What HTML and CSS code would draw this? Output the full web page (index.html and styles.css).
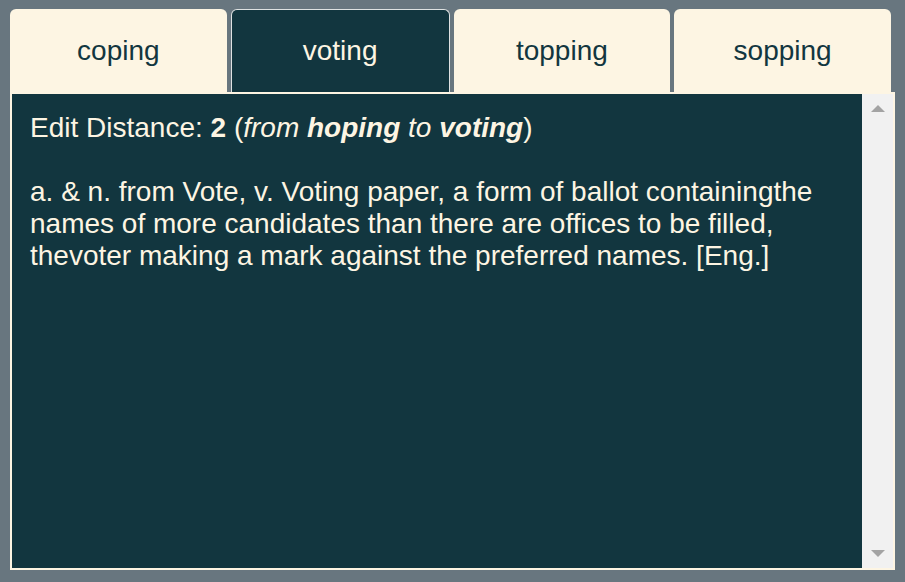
FILE: index.html
```html
<!DOCTYPE html>
<html>
<head>
<meta charset="utf-8">
<link rel="stylesheet" href="styles.css">
</head>
<body>
<div class="app">
  <div class="tabs">
    <div class="tab">coping</div>
    <div class="tab active">voting</div>
    <div class="tab">topping</div>
    <div class="tab">sopping</div>
  </div>
  <div class="panel">
    <div class="content">
      <p class="distance">Edit Distance: <b>2</b> (<i>from <b>hoping</b> to <b>voting</b></i>)</p>
      <p class="definition">a. &amp; n. from Vote, v. Voting paper, a form of ballot containingthe names of more candidates than there are offices to be filled, thevoter making a mark against the preferred names. [Eng.]</p>
    </div>
    <div class="scrollbar">
      <span class="arrow up"></span>
      <span class="arrow down"></span>
    </div>
  </div>
</div>
</body>
</html>
```
FILE: styles.css
```css
html, body {
  margin: 0;
  padding: 0;
  background: #68767f;
  font-family: "Liberation Sans", Arial, sans-serif;
}
.app {
  padding: 9px 0 0 10px;
  width: 885px;
}
.tabs {
  display: flex;
  gap: 4px;
  width: 881px;
  height: 83px;
}
.tab {
  flex: 1;
  background: #fdf5e3;
  color: #12363f;
  border-radius: 6px 6px 0 0;
  display: flex;
  align-items: center;
  justify-content: center;
  font-size: 28px;
}
.tab.active {
  background: #12363f;
  color: #fdf5e3;
  border: 1px solid #dfe2e2;
  border-bottom: none;
}
.panel {
  display: flex;
  width: 881px;
  height: 474px;
  border: 2px solid #fdf5e3;
  background: #12363f;
}
.content {
  flex: 1;
  padding: 18px 18px;
  color: #fdf5e3;
  font-size: 28px;
  line-height: 32px;
}
.content p {
  margin: 0;
}
.distance {
  margin-bottom: 32px !important;
}
.scrollbar {
  width: 31px;
  background: #f1f1f1;
  display: flex;
  flex-direction: column;
  justify-content: space-between;
  align-items: center;
  padding: 11px 0 11px;
}
.arrow {
  width: 0;
  height: 0;
  border-left: 7px solid transparent;
  border-right: 7px solid transparent;
}
.arrow.up {
  border-bottom: 7px solid #a3a3a3;
}
.arrow.down {
  border-top: 7px solid #a3a3a3;
}
```
